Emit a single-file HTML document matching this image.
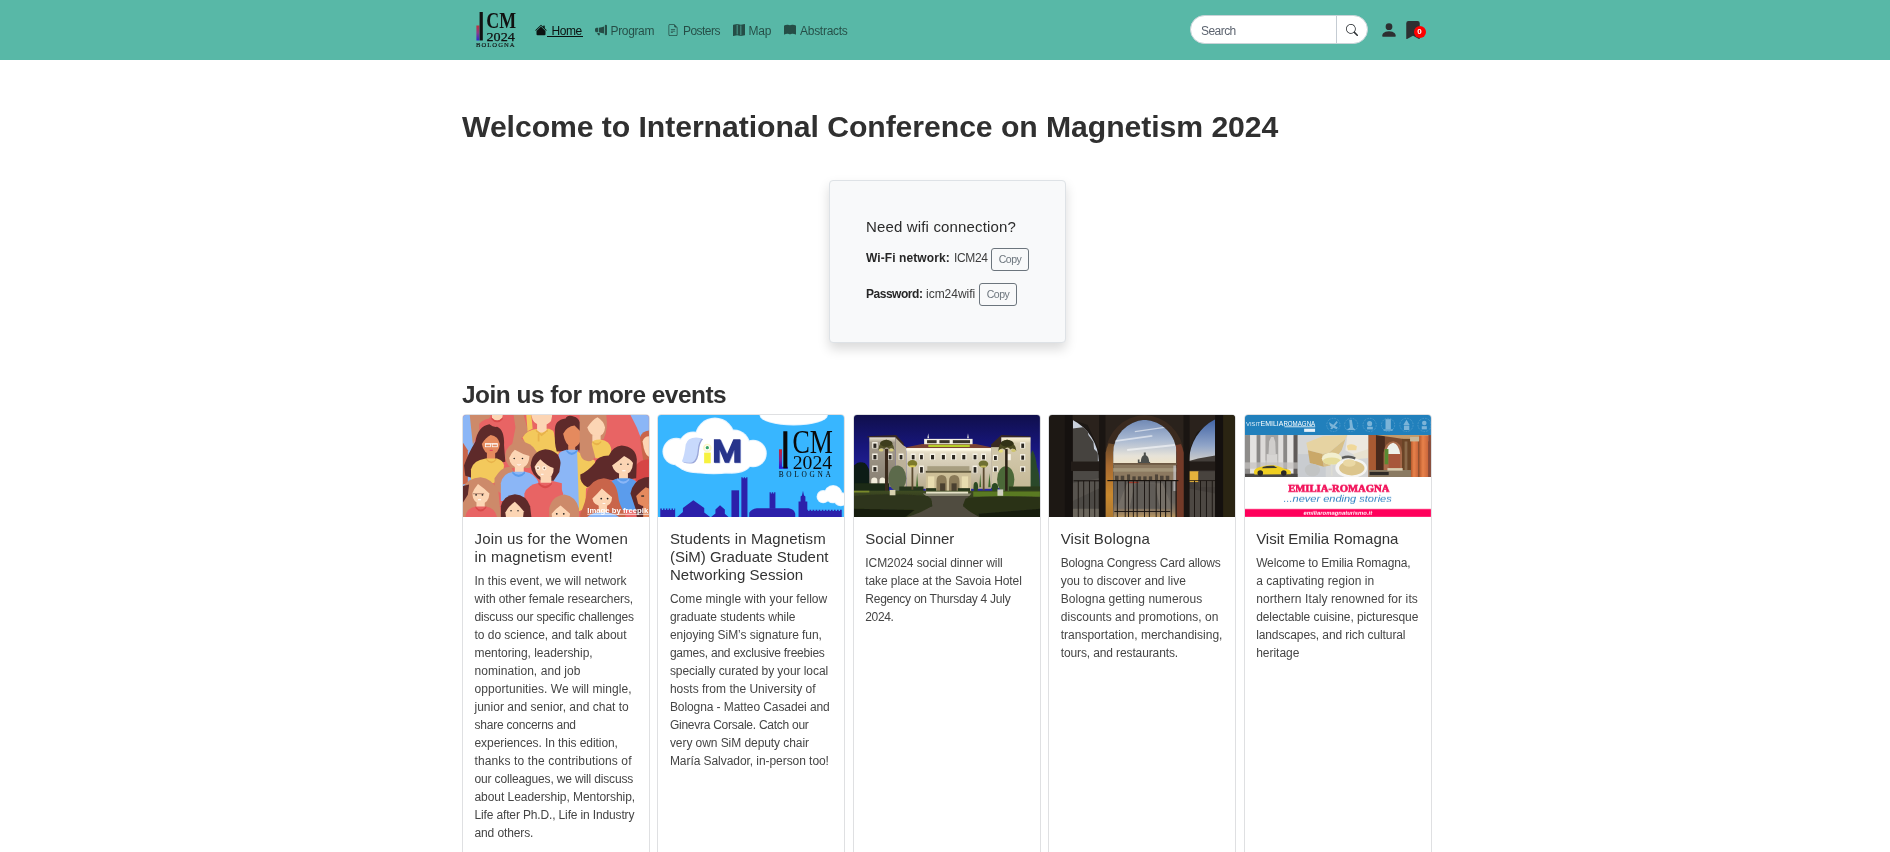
<!DOCTYPE html>
<html lang="en">
<head>
<meta charset="utf-8">
<title>International Conference on Magnetism 2024</title>
<style>
*{box-sizing:border-box}
html,body{margin:0;padding:0}
body{width:1890px;height:852px;overflow:hidden;background:#fff;font-family:"Liberation Sans",sans-serif;font-size:12px;color:#333;position:relative}
.nav{position:absolute;left:0;top:0;width:1890px;height:60px;background:#58b8a7}
.nav a{position:absolute;top:22px;height:18px;line-height:18px;font-size:12px;color:rgba(0,0,0,.58);text-decoration:none;white-space:nowrap}
.nav a.act{color:#0b1211}
.nav svg{position:absolute;fill:currentColor}
.logo{position:absolute;left:475px;top:10px;width:42px;height:38px}
.search{position:absolute;left:1190px;top:15px;width:178px;height:29px;background:#fff;border:1px solid #c9d3d8;border-radius:14.5px;overflow:hidden}
.search .t{position:absolute;left:9.5px;top:6px;font-size:12px;line-height:18px;color:#5d6470;white-space:nowrap}
.search i{position:absolute;left:145px;top:0;width:1px;height:29px;background:#c5ccd3}
h1{position:absolute;left:462px;top:109.4px;margin:0;font-size:30.2px;line-height:36px;font-weight:bold;color:#303030;white-space:nowrap}
h2{position:absolute;left:461.5px;top:379.8px;margin:0;font-size:24.4px;line-height:29px;font-weight:bold;color:#303030;white-space:nowrap}
.wifi{position:absolute;left:829px;top:180px;width:237px;height:163px;background:#f8f9fa;border:1px solid #dee2e6;border-radius:4px;box-shadow:0 6px 12px rgba(0,0,0,.15)}
.t{position:absolute;white-space:nowrap}
.btn{position:absolute;height:23px;border:1px solid #6c757d;border-radius:3px;color:#6c757d;font-size:10.5px;line-height:20px;text-align:center;white-space:nowrap}
.cards{position:absolute;left:462px;top:414px;width:969.5px;height:460px;display:flex;gap:7.5px}
.card{flex:1 1 0;border:1px solid #dfe0e2;border-radius:4px;background:#fff;overflow:hidden;position:relative}
.card .img{display:block;width:100%;height:102px;overflow:hidden;position:relative}
.card .img svg{display:block;width:100%;height:102px}
.card .body{padding:13px 0 0 11.5px}
.card h5{margin:0 0 6px 0;font-size:15px;line-height:18px;font-weight:normal;color:#333}
.card p{margin:0;font-size:12px;line-height:18px;color:#454545}
.l{display:block;white-space:nowrap}
.nav,h1,h2,.t,.btn,.cards{will-change:transform}
</style>
</head>
<body>
<div class="nav">
  <div class="logo"><svg width="42" height="38" viewBox="0 0 42 38" style="position:absolute;left:0;top:0">
<defs><linearGradient id="lg" x1="0" y1="0" x2="0" y2="1"><stop offset="0" stop-color="#c0303a"/><stop offset=".5" stop-color="#8a3a8a"/><stop offset="1" stop-color="#2a2ad0"/></linearGradient></defs>
<rect x="1.4" y="15.5" width="3" height="15" fill="url(#lg)"/>
<rect x="4.6" y="2" width="3.2" height="28.5" fill="#111"/>
<text x="11.3" y="18.4" font-family="Liberation Serif" font-weight="bold" font-size="23.5" textLength="29.8" lengthAdjust="spacingAndGlyphs" fill="#111">CM</text>
<text x="11.5" y="30.5" font-family="Liberation Serif" font-size="13.2" stroke="#111" stroke-width=".25" textLength="28.3" lengthAdjust="spacingAndGlyphs" fill="#111">2024</text>
<text x="1" y="37.1" font-family="Liberation Serif" font-size="6.6" stroke="#111" stroke-width=".15" textLength="38.5" lengthAdjust="spacing" fill="#111">BOLOGNA</text>
</svg></div>
  <a class="act" style="left:551.5px"><svg style="left:-16.5px;top:2px" width="12" height="12" viewBox="0 0 16 16"><path d="M8.707 1.5a1 1 0 0 0-1.414 0L.646 8.146a.5.5 0 0 0 .708.708L8 2.207l6.646 6.647a.5.5 0 0 0 .708-.708L13 5.793V2.5a.5.5 0 0 0-.5-.5h-1a.5.5 0 0 0-.5.5v1.293L8.707 1.5Z"/><path d="m8 3.293 6 6V13.5a1.5 1.5 0 0 1-1.5 1.5h-9A1.5 1.5 0 0 1 2 13.5V9.293l6-6Z"/></svg><span style="position:absolute;left:-4.5px;top:14px;width:35.5px;height:1px;background:#0b1211"></span><span style="letter-spacing:-0.429px">Home</span></a>
  <a style="left:610.5px"><svg style="left:-16px;top:2px" width="12" height="12" viewBox="0 0 16 16"><path d="M13 2.5a1.5 1.5 0 0 1 3 0v11a1.5 1.5 0 0 1-3 0v-11zm-1 .724c-2.067.95-4.539 1.481-7 1.656v6.237a25.222 25.222 0 0 1 1.088.085c2.053.204 4.038.668 5.912 1.56V3.224zm-8 7.841V4.934c-.68.027-1.399.043-2.008.053A2.02 2.02 0 0 0 0 7v2c0 1.106.896 1.996 1.994 2.009a68.14 68.14 0 0 1 .496.008 64 64 0 0 1 1.51.048zm1.39 1.081c.285.021.569.047.85.078l.253 1.69a1 1 0 0 1-.983 1.187h-.548a1 1 0 0 1-.916-.599l-1.314-2.48a65.81 65.81 0 0 1 1.692.064c.327.017.65.037.966.06z"/></svg><span style="letter-spacing:-0.345px">Program</span></a>
  <a style="left:683px"><svg style="left:-16px;top:2px" width="12" height="12" viewBox="0 0 16 16"><path d="M5.5 7a.5.5 0 0 0 0 1h5a.5.5 0 0 0 0-1h-5zM5 9.5a.5.5 0 0 1 .5-.5h5a.5.5 0 0 1 0 1h-5a.5.5 0 0 1-.5-.5zm0 2a.5.5 0 0 1 .5-.5h2a.5.5 0 0 1 0 1h-2a.5.5 0 0 1-.5-.5z"/><path d="M9.5 0H4a2 2 0 0 0-2 2v12a2 2 0 0 0 2 2h8a2 2 0 0 0 2-2V4.5L9.5 0zm0 1v2A1.5 1.5 0 0 0 11 4.5h2V14a1 1 0 0 1-1 1H4a1 1 0 0 1-1-1V2a1 1 0 0 1 1-1h5.5z"/></svg><span style="letter-spacing:-0.541px">Posters</span></a>
  <a style="left:748.5px"><svg style="left:-16px;top:2px" width="12" height="12" viewBox="0 0 16 16"><path fill-rule="evenodd" d="M16 .5a.5.5 0 0 0-.598-.49L10.5.99 5.598.01a.5.5 0 0 0-.196 0l-5 1A.5.5 0 0 0 0 1.5v14a.5.5 0 0 0 .598.49l4.902-.98 4.902.98a.502.502 0 0 0 .196 0l5-1A.5.5 0 0 0 16 14.5V.5zM5 14.09V1.11l.5-.1.5.1v12.98l-.402-.08a.498.498 0 0 0-.196 0L5 14.09zm5 .8V1.91l.402.08a.5.5 0 0 0 .196 0L11 1.91v12.98l-.5.1-.5-.1z"/></svg><span style="letter-spacing:-0.248px">Map</span></a>
  <a style="left:800px"><svg style="left:-16px;top:2px" width="12" height="12" viewBox="0 0 16 16"><path d="M8 1.783C7.015.936 5.587.81 4.287.94c-1.514.153-3.042.672-3.994 1.105A.5.5 0 0 0 0 2.5v11a.5.5 0 0 0 .707.455c.882-.4 2.303-.881 3.68-1.02 1.409-.142 2.59.087 3.223.877a.5.5 0 0 0 .78 0c.633-.79 1.814-1.019 3.222-.877 1.378.139 2.8.62 3.681 1.02A.5.5 0 0 0 16 13.5v-11a.5.5 0 0 0-.293-.455c-.952-.433-2.48-.952-3.994-1.105C10.413.809 8.985.936 8 1.783z"/></svg><span style="letter-spacing:-0.268px">Abstracts</span></a>
  <div class="search"><span class="t"><span style="letter-spacing:-0.555px">Search</span></span><i></i>
    <svg style="left:154.5px;top:8px;fill:#2b2f33" width="12" height="12" viewBox="0 0 16 16"><path d="M11.742 10.344a6.5 6.5 0 1 0-1.397 1.398h-.001c.03.04.062.078.098.115l3.85 3.85a1 1 0 0 0 1.415-1.414l-3.85-3.85a1.007 1.007 0 0 0-.115-.1zM12 6.5a5.5 5.5 0 1 1-11 0 5.5 5.5 0 0 1 11 0z"/></svg>
  </div>
  <svg style="left:1379.5px;top:21px;fill:#2d2f31" width="18" height="18" viewBox="0 0 16 16"><path d="M3 14s-1 0-1-1 1-4 6-4 6 3 6 4-1 1-1 1H3zm5-6a3 3 0 1 0 0-6 3 3 0 0 0 0 6z"/></svg>
  <svg style="left:1403.5px;top:21px;fill:#2d2f31" width="18" height="18" viewBox="0 0 16 16"><path d="M2 2v13.5a.5.5 0 0 0 .74.439L8 13.069l5.26 2.87A.5.5 0 0 0 14 15.5V2a2 2 0 0 0-2-2H4a2 2 0 0 0-2 2z"/></svg>
  <div style="position:absolute;left:1413.5px;top:25.5px;width:12px;height:12px;border-radius:6px;background:#f00;color:#fff;font-size:8px;font-weight:bold;line-height:12px;text-align:center">0</div>
</div>
<h1><span style="letter-spacing:-0.065px">Welcome to International Conference on Magnetism 2024</span></h1>
<div class="wifi"></div>
<div class="t" style="left:866.3px;top:217.6px;font-size:15px;line-height:18px;color:#2b2b2b"><span style="letter-spacing:0.154px">Need wifi connection?</span></div>
<div class="t" style="left:866px;top:249px;font-size:12px;line-height:18px;font-weight:bold;color:#262626"><span style="letter-spacing:0.088px">Wi-Fi network:</span></div>
<div class="t" style="left:953.5px;top:249px;font-size:12px;line-height:18px;color:#3c3c3c"><span style="letter-spacing:-0.369px">ICM24</span></div>
<div class="btn" style="left:991px;top:247.5px;width:38px"><span style="letter-spacing:-0.504px">Copy</span></div>
<div class="t" style="left:866px;top:285px;font-size:12px;line-height:18px;font-weight:bold;color:#262626"><span style="letter-spacing:-0.476px">Password:</span></div>
<div class="t" style="left:926px;top:285px;font-size:12px;line-height:18px;color:#3c3c3c"><span style="letter-spacing:-0.016px">icm24wifi</span></div>
<div class="btn" style="left:979px;top:283px;width:38px"><span style="letter-spacing:-0.504px">Copy</span></div>
<h2><span style="letter-spacing:-0.476px">Join us for more events</span></h2>
<div class="cards">
<div class="card"><div class="img"><svg viewBox="22 22 1463 803" preserveAspectRatio="none">
<rect x="22" y="22" width="1463" height="803" fill="#e86464"/>
<!-- far-left blue figure + tan hair behind -->
<rect x="22" y="22" width="90" height="560" fill="#8bb6f6"/>
<path d="M75 22 L240 22 L200 120 L130 180 L100 260 Z" fill="#cd8a6a"/>
<path d="M22 240 L60 300 L60 560 L22 570Z" fill="#c9654a"/>
<!-- red figure top-left -->
<path d="M150 90 Q200 40 290 50 Q400 40 440 140 L440 380 L150 380Z" fill="#e86464"/>
<path d="M250 22 L335 22 L330 50 Q290 80 250 50Z" fill="#fcd5b4"/>
<path d="M245 40 Q290 90 335 40 L335 55 Q290 105 245 55Z" fill="#d94a4a"/>
<!-- tan area behind between red and yellow -->
<path d="M420 22 L500 22 L535 150 L480 205 L545 255 L440 335 L400 300 L435 120Z" fill="#cd8a6a"/>
<!-- yellow figure top center -->
<path d="M520 22 L560 22 L570 130 L530 150Z" fill="#f3c95c"/>
<path d="M490 200 Q520 140 610 130 L700 130 Q770 150 775 260 L775 330 L560 330Z" fill="#f3c95c"/>
<path d="M560 22 L725 22 L715 70 Q680 110 640 100 Q590 100 570 60Z" fill="#fcd5b4"/>
<rect x="605" y="90" width="75" height="70" fill="#fcd5b4"/>
<path d="M595 135 L640 170 L690 135 L690 150 L640 190 L595 150Z" fill="#e8b24a"/>
<rect x="610" y="170" width="14" height="60" fill="#e8b24a"/>
<!-- red behind top middle -->
<path d="M725 22 L850 22 L760 120 L745 200 L730 130Z" fill="#e86464"/>
<!-- dark-skin woman top center-right -->
<path d="M745 150 Q740 60 830 50 Q840 22 880 30 Q950 40 950 120 L950 300 L760 310 Q740 250 745 150Z" fill="#5e2a2a"/>
<path d="M810 170 Q840 110 900 105 L945 150 L945 230 Q920 280 880 275 Q830 270 810 170Z" fill="#e58a5e"/>
<rect x="850" y="260" width="55" height="60" fill="#e58a5e"/>
<!-- long blue body -->
<path d="M775 330 Q790 300 850 295 L905 295 Q935 300 935 340 L935 825 L800 825 L800 560 L720 540 L770 430Z" fill="#8bb6f6"/>
<path d="M835 292 Q875 345 925 292 L925 310 Q875 365 835 310Z" fill="#5b9cec"/>
<!-- big yellow body right of blue -->
<path d="M920 310 L1060 380 L1060 560 L990 600 L985 760 L935 780Z" fill="#f3c95c"/>
<!-- tan-haired woman upper right -->
<path d="M940 22 L1160 22 Q1170 140 1130 210 L1060 230 L1065 340 Q1050 390 1000 385 Q945 380 940 300Z" fill="#cd8a6a"/>
<path d="M1000 120 Q1040 60 1080 40 Q1130 70 1140 120 Q1135 190 1075 190 Q1020 185 1000 120Z" fill="#fcd5b4"/>
<rect x="1040" y="180" width="65" height="60" fill="#fcd5b4"/>
<path d="M1035 250 Q1040 215 1100 215 Q1180 225 1190 290 L1190 340 L1065 365Z" fill="#f3c95c"/>
<path d="M1040 225 Q1075 265 1110 225 L1110 238 Q1075 280 1040 240Z" fill="#e8b24a"/>
<!-- red region top right -->
<path d="M1150 22 L1345 22 L1420 250 L1440 420 L1380 520 L1190 360 L1190 280 Q1180 230 1130 210 Q1165 140 1150 22Z" fill="#e86464"/>
<!-- top-right blue & face at far right -->
<path d="M1340 22 L1485 22 L1485 160 L1420 200 L1390 120Z" fill="#8bb6f6"/>
<path d="M1415 200 Q1430 150 1485 145 L1485 400 L1440 380Z" fill="#c9654a"/>
<path d="M1435 230 Q1450 190 1485 190 L1485 350 Q1450 340 1435 230Z" fill="#fcd5b4"/>
<path d="M1380 420 Q1420 370 1485 370 L1485 560 L1380 540Z" fill="#d64545"/>
<!-- woman with glasses (dark hair, left) -->
<path d="M30 420 Q60 330 120 230 Q140 110 230 95 Q260 120 290 115 Q350 140 345 260 L355 390 L300 400 L100 520 L40 500Z" fill="#5e2a2a"/>
<path d="M170 250 Q200 200 240 180 Q300 190 312 250 Q305 330 245 330 Q185 330 170 250Z" fill="#e58a5e"/>
<rect x="210" y="320" width="65" height="60" fill="#e58a5e"/>
<path d="M85 450 Q100 380 200 365 L290 365 Q340 380 345 420 L330 520 L260 560 L85 540Z" fill="#f3c95c"/>
<path d="M205 362 Q245 415 285 362 L285 375 Q245 430 205 375Z" fill="#e8b24a"/>
<rect x="195" y="245" width="100" height="8" fill="#fff"/>
<rect x="198" y="250" width="40" height="22" fill="none" stroke="#fff" stroke-width="6"/>
<rect x="252" y="250" width="40" height="22" fill="none" stroke="#fff" stroke-width="6"/>
<rect x="232" y="296" width="24" height="8" fill="#e0405a"/>
<!-- tan-haired woman center-left with blue shirt -->
<path d="M355 330 Q370 250 450 235 Q560 225 600 310 L590 360 L545 440 L400 440 Q350 400 355 330Z" fill="#cd8a6a"/>
<path d="M270 520 Q330 420 400 430 L420 470 L330 520 L320 640 L270 600Z" fill="#cd8a6a"/>
<path d="M385 360 Q400 320 430 295 Q490 330 545 345 Q540 440 465 440 Q395 435 385 360Z" fill="#fcd5b4"/>
<rect x="430" y="430" width="70" height="55" fill="#fcd5b4"/>
<path d="M320 560 Q330 480 420 468 L510 468 Q590 480 620 560 L620 700 L320 700Z" fill="#8bb6f6"/>
<path d="M410 465 Q460 520 510 465 L510 482 Q460 540 410 482Z" fill="#5b9cec"/>
<circle cx="425" cy="365" r="6" fill="#222"/><circle cx="490" cy="365" r="6" fill="#222"/>
<path d="M445 405 Q462 420 480 405 L478 412 Q462 428 447 412Z" fill="#fff"/>
<!-- dark-haired woman right (flowing hair) -->
<path d="M945 490 Q1000 470 1060 400 Q1080 340 1170 340 Q1200 270 1270 262 Q1380 270 1390 370 L1385 520 L1250 540 L1160 530 L1000 590 Q940 560 945 490Z" fill="#5e2a2a"/>
<path d="M1195 420 Q1250 380 1290 345 Q1340 370 1360 400 Q1355 490 1285 490 Q1215 490 1195 420Z" fill="#fcd5b4"/>
<rect x="1250" y="480" width="70" height="60" fill="#fcd5b4"/>
<path d="M1190 545 Q1220 520 1260 520 L1330 520 Q1380 530 1390 560 L1390 770 L1240 770Z" fill="#5b9cec"/>
<path d="M1235 520 Q1285 570 1330 520 L1330 535 Q1285 590 1235 535Z" fill="#8bb6f6"/>
<circle cx="1265" cy="410" r="6" fill="#222"/><circle cx="1320" cy="410" r="6" fill="#222"/>
<rect x="1275" y="457" width="26" height="8" fill="#fff"/>
<!-- center dark-haired woman with glasses, red shirt -->
<path d="M555 420 Q560 310 670 292 Q780 300 790 400 L780 470 L735 540 L640 540 Q560 500 555 420Z" fill="#5e2a2a"/>
<path d="M585 430 Q600 400 630 370 Q680 420 735 440 Q740 520 665 522 Q600 515 585 430Z" fill="#fcd5b4"/>
<rect x="632" y="505" width="85" height="80" fill="#fcd5b4"/>
<path d="M505 640 Q530 570 620 555 L720 555 Q790 570 810 640 L810 825 L505 825Z" fill="#e86464"/>
<path d="M615 552 Q670 610 722 552 L722 568 Q670 630 615 568Z" fill="#d94a4a"/>
<circle cx="612" cy="440" r="14" fill="none" stroke="#fff" stroke-width="5"/><circle cx="662" cy="440" r="14" fill="none" stroke="#fff" stroke-width="5"/>
<circle cx="612" cy="440" r="5" fill="#222"/><circle cx="662" cy="440" r="5" fill="#222"/>
<rect x="636" y="485" width="20" height="7" fill="#fff"/>
<!-- bottom-left girl with glasses -->
<path d="M22 590 Q60 520 160 512 Q250 520 300 620 L320 825 L22 825Z" fill="#cd8a6a"/>
<path d="M22 580 L70 570 L60 650 L22 710Z" fill="#5e2a2a"/>
<path d="M95 640 Q110 600 140 565 Q190 600 230 640 Q225 720 160 722 Q100 715 95 640Z" fill="#fcd5b4"/>
<rect x="128" y="710" width="65" height="60" fill="#fcd5b4"/>
<path d="M40 825 Q50 750 130 742 L200 742 Q270 750 290 825Z" fill="#e86464"/>
<path d="M120 740 Q160 790 205 740 L205 755 Q160 810 120 755Z" fill="#d94a4a"/>
<circle cx="125" cy="650" r="7" fill="#222"/><circle cx="175" cy="650" r="7" fill="#222"/>
<rect x="98" y="640" width="90" height="5" fill="#8a5a4a"/>
<rect x="140" y="685" width="24" height="8" fill="#fff"/>
<!-- bottom dark-haired girl -->
<path d="M320 740 Q340 655 430 645 Q520 650 550 740 L560 825 L320 825Z" fill="#5e2a2a"/>
<path d="M355 790 Q380 740 430 705 Q470 740 500 780 L495 825 L360 825Z" fill="#fcd5b4"/>
<circle cx="400" cy="775" r="6" fill="#222"/><circle cx="455" cy="775" r="6" fill="#222"/>
<!-- bottom center tan-haired girl -->
<path d="M700 760 Q720 660 820 648 Q910 660 935 760 L935 825 L700 825Z" fill="#cd8a6a"/>
<path d="M720 800 Q750 760 790 735 Q830 770 865 800 L860 825 L722 825Z" fill="#fcd5b4"/>
<circle cx="760" cy="800" r="7" fill="#222"/><circle cx="815" cy="800" r="7" fill="#222"/>
<!-- auburn-haired girl bottom right -->
<path d="M945 800 Q990 700 1000 620 Q1030 530 1130 520 Q1220 530 1240 640 Q1250 740 1300 800 L1300 825 L945 825Z" fill="#c9654a"/>
<path d="M1040 680 Q1080 640 1115 600 Q1160 640 1195 670 Q1195 740 1125 742 Q1050 740 1040 680Z" fill="#fcd5b4"/>
<rect x="1090" y="730" width="65" height="70" fill="#fcd5b4"/>
<path d="M1000 825 Q1040 790 1090 790 L1160 790 Q1220 800 1250 825Z" fill="#8bb6f6"/>
<circle cx="1110" cy="680" r="7" fill="#222"/><circle cx="1160" cy="680" r="7" fill="#222"/>
<rect x="1120" y="715" width="22" height="7" fill="#fff"/>
<!-- far right dark-haired dark-skin woman -->
<path d="M1340 640 Q1360 540 1450 515 L1485 510 L1485 825 L1390 825 L1380 760Z" fill="#5e2a2a"/>
<path d="M1385 660 Q1420 620 1460 590 L1485 600 L1485 740 Q1430 745 1400 720Z" fill="#e58a5e"/>
<path d="M1440 720 L1485 720 L1485 825 L1440 825Z" fill="#e58a5e"/>
<rect x="1425" y="655" width="22" height="10" fill="#222"/>
<!-- caption -->
<text x="1000" y="793" font-family="Liberation Sans" font-weight="bold" font-size="50" fill="#fff" textLength="480" lengthAdjust="spacingAndGlyphs">Image by freepik</text>
<rect x="1000" y="800" width="485" height="6" fill="#fff"/>
</svg></div><div class="body"><h5><span class="l" style="letter-spacing:0.176px">Join us for the Women</span><span class="l" style="letter-spacing:0.214px">in magnetism event!</span></h5><p><span class="l" style="letter-spacing:-0.002px">In this event, we will network</span><span class="l" style="letter-spacing:-0.094px">with other female researchers,</span><span class="l" style="letter-spacing:-0.173px">discuss our specific challenges</span><span class="l" style="letter-spacing:-0.027px">to do science, and talk about</span><span class="l" style="letter-spacing:-0.029px">mentoring, leadership,</span><span class="l" style="letter-spacing:0.066px">nomination, and job</span><span class="l" style="letter-spacing:0.064px">opportunities. We will mingle,</span><span class="l" style="letter-spacing:0.006px">junior and senior, and chat to</span><span class="l" style="letter-spacing:-0.228px">share concerns and</span><span class="l" style="letter-spacing:-0.07px">experiences. In this edition,</span><span class="l" style="letter-spacing:0.122px">thanks to the contributions of</span><span class="l" style="letter-spacing:-0.155px">our colleagues, we will discuss</span><span class="l" style="letter-spacing:-0.052px">about Leadership, Mentorship,</span><span class="l" style="letter-spacing:-0.146px">Life after Ph.D., Life in Industry</span><span class="l" style="letter-spacing:-0.113px">and others.</span></p></div></div>
<div class="card"><div class="img"><svg viewBox="22 22 1463 803" preserveAspectRatio="none">
<defs><linearGradient id="lg2" x1="0" y1="0" x2="0" y2="1"><stop offset="0" stop-color="#d0202a"/><stop offset=".55" stop-color="#7a2a9a"/><stop offset="1" stop-color="#1a1ae0"/></linearGradient>
<filter id="cb" x="-5%" y="-5%" width="110%" height="110%"><feGaussianBlur stdDeviation="3"/></filter></defs>
<rect x="22" y="22" width="1463" height="803" fill="#38b6ff"/>
<g fill="#e4f3ff" filter="url(#cb)">
<circle cx="470" cy="200" r="158"/><circle cx="165" cy="310" r="108"/><circle cx="770" cy="325" r="108"/><circle cx="620" cy="265" r="128"/><circle cx="300" cy="270" r="118"/><ellipse cx="460" cy="385" rx="320" ry="103"/><ellipse cx="330" cy="410" rx="150" ry="70"/><ellipse cx="600" cy="410" rx="150" ry="75"/>
<ellipse cx="1090" cy="25" rx="268" ry="80"/>
<circle cx="1400" cy="645" r="72"/><circle cx="1322" cy="665" r="52"/><circle cx="1460" cy="685" r="56"/>
</g>
<g fill="#fff">
<circle cx="470" cy="200" r="150"/><circle cx="165" cy="310" r="100"/><circle cx="770" cy="325" r="100"/><circle cx="620" cy="265" r="120"/><circle cx="300" cy="270" r="110"/><ellipse cx="460" cy="385" rx="312" ry="95"/><ellipse cx="330" cy="410" rx="142" ry="62"/><ellipse cx="600" cy="410" rx="142" ry="67"/>
<ellipse cx="1090" cy="25" rx="260" ry="72"/>
<circle cx="1400" cy="645" r="65"/><circle cx="1322" cy="665" r="45"/><circle cx="1460" cy="685" r="49"/>
</g>
<!-- SiM -->
<path d="M222 395 Q240 340 248 260 Q262 205 330 205 L378 210 Q350 240 345 300 Q340 385 300 402 Q255 408 222 395Z" fill="#9aa6d8"/>
<path d="M210 388 Q232 335 240 255 Q255 200 322 200 L368 205 Q340 235 335 295 Q330 378 290 395 Q245 402 210 388Z" fill="#c8d9fc"/>
<rect x="385" y="318" width="52" height="84" fill="#f7f23e"/>
<circle cx="410" cy="282" r="34" fill="#fbf6c8"/><circle cx="410" cy="280" r="20" fill="#fff"/><circle cx="410" cy="279" r="13" fill="#3aa66a"/>
<path d="M470 402 L470 218 L520 218 L570 330 L620 218 L676 218 L676 402 L628 402 L628 300 L585 402 L555 402 L512 300 L512 402Z" fill="#9aa6d8"/>
<path d="M462 398 L462 213 L512 213 L565 330 L615 213 L670 213 L670 398 L622 398 L622 295 L580 398 L548 398 L506 295 L506 398Z" fill="#27348b"/>
<!-- ICM logo -->
<rect x="974" y="292" width="24" height="150" fill="url(#lg2)"/>
<path d="M974 430 L1045 430 L1045 445 L974 445Z" fill="#2a1fd0"/>
<rect x="1008" y="150" width="32" height="292" fill="#0a0a0a"/>
<text x="1080" y="321" font-family="Liberation Serif" font-size="258" textLength="318" lengthAdjust="spacingAndGlyphs" fill="#0a0a0a">CM</text>
<text x="1082" y="445" font-family="Liberation Serif" font-size="140" textLength="310" lengthAdjust="spacingAndGlyphs" fill="#0a0a0a">2024</text>
<text x="972" y="510" font-family="Liberation Serif" font-size="58" textLength="410" lengthAdjust="spacing" fill="#0a0a0a">BOLOGNA</text>
<!-- skyline -->
<g fill="#2c20aa">
<path d="M40 825 L40 758 L52 758 L52 770 L62 770 L62 758 L74 758 L74 770 L84 770 L84 758 L96 758 L96 770 L106 770 L106 758 L118 758 L118 770 L128 770 L128 758 L140 758 L140 770 L150 770 L150 758 L157 758 L157 825Z"/>
<path d="M172 825 L218 785 L218 755 L300 693 L386 755 L386 790 L432 825Z"/>
<path d="M440 825 L474 797 L474 765 L510 733 L548 765 L548 800 L577 825Z"/>
<rect x="600" y="615" width="60" height="210"/>
<path d="M678 825 L678 513 L688 513 L688 520 L697 520 L697 513 L707 513 L707 520 L716 520 L716 513 L726 513 L726 825Z"/>
<path d="M740 825 L740 792 Q758 762 800 757 L1050 757 Q1095 765 1102 800 L1102 825Z"/>
<path d="M900 760 L900 630 L910 630 L910 640 L918 640 L918 630 L928 630 L928 640 L936 640 L936 630 L946 630 L946 760Z"/>
<path d="M1128 825 L1128 702 L1144 702 L1144 664 L1155 655 L1163 618 L1171 655 L1182 664 L1182 702 L1197 702 L1197 825Z"/>
<path d="M1190 825 L1190 768 L1204 768 L1204 778 L1214 778 L1214 768 L1228 768 L1228 778 L1238 778 L1238 768 L1252 768 L1252 778 L1262 778 L1262 768 L1276 768 L1276 778 L1286 778 L1286 768 L1300 768 L1300 778 L1310 778 L1310 768 L1324 768 L1324 778 L1334 778 L1334 768 L1348 768 L1348 778 L1358 778 L1358 768 L1372 768 L1372 778 L1382 778 L1382 768 L1396 768 L1396 778 L1406 778 L1406 768 L1420 768 L1420 778 L1430 778 L1430 768 L1444 768 L1444 778 L1454 778 L1454 768 L1468 768 L1468 825Z"/>
</g>
</svg></div><div class="body"><h5><span class="l" style="letter-spacing:0.158px">Students in Magnetism</span><span class="l" style="letter-spacing:0.008px">(SiM) Graduate Student</span><span class="l" style="letter-spacing:0.041px">Networking Session</span></h5><p><span class="l" style="letter-spacing:0.048px">Come mingle with your fellow</span><span class="l" style="letter-spacing:-0.054px">graduate students while</span><span class="l" style="letter-spacing:-0.041px">enjoying SiM’s signature fun,</span><span class="l" style="letter-spacing:-0.232px">games, and exclusive freebies</span><span class="l" style="letter-spacing:-0.061px">specially curated by your local</span><span class="l" style="letter-spacing:0.011px">hosts from the University of</span><span class="l" style="letter-spacing:-0.082px">Bologna - Matteo Casadei and</span><span class="l" style="letter-spacing:-0.258px">Ginevra Corsale. Catch our</span><span class="l" style="letter-spacing:-0.065px">very own SiM deputy chair</span><span class="l" style="letter-spacing:-0.059px">María Salvador, in-person too!</span></p></div></div>
<div class="card"><div class="img"><svg viewBox="25 22 1458 803" preserveAspectRatio="none">
<defs>
<linearGradient id="sky3" x1="0" y1="0" x2="0" y2="1"><stop offset="0" stop-color="#100f4c"/><stop offset=".3" stop-color="#17167a"/><stop offset=".65" stop-color="#2624a2"/><stop offset="1" stop-color="#2c2aa8"/></linearGradient>
<linearGradient id="bl3" x1="0" y1="0" x2="0" y2="1"><stop offset="0" stop-color="#fbf6e2"/><stop offset=".12" stop-color="#e2dac4"/><stop offset=".55" stop-color="#cdc4ae"/><stop offset="1" stop-color="#b8ab8c"/></linearGradient>
<linearGradient id="bw3" x1="0" y1="0" x2="0" y2="1"><stop offset="0" stop-color="#efe8d2"/><stop offset=".1" stop-color="#a59c8c"/><stop offset="1" stop-color="#857d70"/></linearGradient>
<linearGradient id="br3" x1="0" y1="0" x2="0" y2="1"><stop offset="0" stop-color="#fff6d8"/><stop offset=".12" stop-color="#d6ccb0"/><stop offset="1" stop-color="#c4b896"/></linearGradient>
<linearGradient id="lawn3" x1="0" y1="0" x2="0" y2="1"><stop offset="0" stop-color="#3f4c22"/><stop offset=".25" stop-color="#343d1f"/><stop offset="1" stop-color="#1f2511"/></linearGradient>
<filter id="b3"><feGaussianBlur stdDeviation="5"/></filter>
<filter id="b3s"><feGaussianBlur stdDeviation="2.5"/></filter>
</defs>
<rect x="25" y="22" width="1458" height="803" fill="url(#sky3)"/>
<!-- dark trees left/right -->
<path d="M25 420 Q60 380 110 400 Q150 430 150 520 L150 620 L25 620Z" fill="#0b1a14" filter="url(#b3s)"/>
<path d="M1400 600 Q1370 500 1395 420 Q1405 330 1425 300 Q1450 340 1460 430 Q1483 480 1483 600Z" fill="#2c4a2a" filter="url(#b3s)"/>
<!-- left tower -->
<path d="M130 190 L355 180 L415 245 L415 290 L350 290 L350 200 L130 200Z" fill="#3a2a22"/>
<rect x="145" y="198" width="205" height="390" fill="url(#bw3)"/>
<path d="M350 200 L410 260 L435 275 L435 590 L350 590Z" fill="#bdb29a"/>
<!-- right wing -->
<path d="M1410 190 L1180 180 L1100 255 L1100 290 L1180 290 L1180 200 L1410 200Z" fill="#3a2a22"/>
<rect x="1100" y="275" width="90" height="320" fill="#cfc5a8"/>
<rect x="1180" y="198" width="230" height="400" fill="url(#br3)"/>
<!-- central block -->
<path d="M435 275 L560 250 L980 250 L1100 275 L1100 285 L435 285Z" fill="#7a4234"/>
<rect x="435" y="283" width="665" height="320" fill="url(#bl3)"/>
<rect x="435" y="283" width="665" height="18" fill="#fffbe6"/>
<rect x="575" y="210" width="380" height="42" fill="#f4f0e4"/>
<g fill="#3a3428"><rect x="598" y="220" width="75" height="24"/><rect x="695" y="220" width="80" height="24"/><rect x="800" y="220" width="135" height="24"/></g>
<rect x="608" y="256" width="325" height="18" fill="#b7cf28"/>
<path d="M600 205 L607 165 L614 205Z M912 205 L919 165 L926 205Z" fill="#ddd"/>
<!-- windows -->
<g fill="#f6f2e6">
<rect x="470" y="325" width="38" height="50"/><rect x="535" y="325" width="38" height="50"/><rect x="620" y="325" width="42" height="50"/><rect x="705" y="325" width="42" height="50"/><rect x="785" y="325" width="42" height="50"/><rect x="865" y="325" width="42" height="50"/><rect x="955" y="325" width="38" height="50"/><rect x="1022" y="325" width="38" height="50"/>
<rect x="535" y="420" width="38" height="60"/><rect x="955" y="420" width="38" height="60"/>
<rect x="168" y="235" width="42" height="50"/><rect x="168" y="325" width="42" height="50"/><rect x="168" y="420" width="42" height="50"/><rect x="290" y="325" width="36" height="50"/>
<rect x="375" y="325" width="38" height="50"/>
<rect x="1115" y="335" width="38" height="45"/><rect x="1115" y="425" width="38" height="45"/>
<rect x="1328" y="235" width="40" height="50"/><rect x="1328" y="330" width="40" height="48"/><rect x="1328" y="425" width="40" height="45"/><rect x="1225" y="330" width="30" height="48"/>
</g>
<g fill="#2a2620">
<rect x="478" y="337" width="22" height="34"/><rect x="543" y="337" width="22" height="34"/><rect x="629" y="337" width="24" height="34"/><rect x="714" y="337" width="24" height="34"/><rect x="794" y="337" width="24" height="34"/><rect x="874" y="337" width="24" height="34"/><rect x="963" y="337" width="22" height="34"/><rect x="1030" y="337" width="22" height="34"/>
<rect x="543" y="432" width="22" height="44"/><rect x="963" y="432" width="22" height="44"/>
<rect x="177" y="247" width="24" height="34"/><rect x="177" y="337" width="24" height="34"/><rect x="177" y="432" width="24" height="34"/><rect x="297" y="337" width="22" height="34"/><rect x="383" y="337" width="22" height="34"/>
<rect x="1123" y="345" width="22" height="31"/><rect x="1123" y="435" width="22" height="31"/>
<rect x="1337" y="247" width="22" height="34"/><rect x="1337" y="341" width="22" height="33"/><rect x="1337" y="436" width="22" height="30"/>
</g>
<!-- portico -->
<rect x="588" y="468" width="355" height="165" fill="#cdbf98"/>
<rect x="588" y="462" width="355" height="14" fill="#5a5238"/>
<rect x="600" y="425" width="330" height="40" fill="#9a9070" opacity=".75"/>
<path d="M672 633 L672 545 Q672 495 712 495 Q752 495 752 545 L752 633Z" fill="#8a7a58"/>
<path d="M770 633 L770 545 Q770 495 812 495 Q852 495 852 545 L852 633Z" fill="#8a7a58"/>
<rect x="605" y="505" width="50" height="95" fill="#e8dcb0"/><rect x="870" y="505" width="50" height="95" fill="#e8dcb0"/>
<rect x="700" y="560" width="40" height="70" fill="#4a4030"/><rect x="790" y="560" width="40" height="70" fill="#4a4030"/>
<!-- arches left tower bottom -->
<path d="M160 570 L160 540 Q160 515 185 515 Q208 515 208 540 L208 570Z M225 570 L225 540 Q225 515 248 515 Q270 515 270 540 L270 570Z" fill="#f4eedc"/>
<!-- bushes in front of building -->
<g filter="url(#b3s)">
<ellipse cx="365" cy="520" rx="70" ry="100" fill="#5c6a4c"/>
<ellipse cx="1215" cy="530" rx="68" ry="105" fill="#4c6838"/>
<rect x="30" y="560" width="270" height="70" fill="#1c2a14"/>
<rect x="380" y="585" width="190" height="40" fill="#26341a"/>
<rect x="590" y="598" width="80" height="35" fill="#26341a"/><rect x="840" y="598" width="95" height="35" fill="#26341a"/>
<ellipse cx="980" cy="590" rx="18" ry="40" fill="#2c4a22"/><ellipse cx="1130" cy="595" rx="26" ry="38" fill="#2c4a22"/>
<rect x="1240" y="585" width="243" height="45" fill="#2a3a1a"/>
<path d="M512 590 L520 480 L528 590Z M1008 590 L1015 480 L1022 590Z M1078 590 L1087 480 L1096 590Z" fill="#3c6a2a"/>
</g>
<!-- palms -->
<rect x="268" y="290" width="24" height="375" fill="#3a2a1c"/>
<g filter="url(#b3s)"><path d="M215 300 Q220 230 278 215 Q335 230 342 300 Q320 270 300 290 Q280 260 262 292 Q240 268 215 300Z" fill="#55532a"/><ellipse cx="278" cy="245" rx="48" ry="26" fill="#3c3c1c"/><ellipse cx="238" cy="298" rx="18" ry="12" fill="#d6cc7a"/><ellipse cx="318" cy="298" rx="18" ry="12" fill="#d6cc7a"/></g>
<rect x="1210" y="290" width="20" height="375" fill="#2c2216"/>
<g filter="url(#b3s)"><path d="M1155 310 Q1162 232 1226 215 Q1290 232 1298 305 Q1275 272 1252 294 Q1228 262 1205 296 Q1182 272 1155 310Z" fill="#4c4a22"/><ellipse cx="1226" cy="245" rx="50" ry="26" fill="#323216"/><ellipse cx="1176" cy="306" rx="18" ry="13" fill="#e6dc78"/><ellipse cx="1276" cy="302" rx="18" ry="12" fill="#cfc56e"/></g>
<rect x="476" y="420" width="14" height="190" fill="#5a4a30"/>
<g filter="url(#b3s)"><ellipse cx="483" cy="405" rx="38" ry="28" fill="#7c7a2c"/><ellipse cx="483" cy="426" rx="26" ry="8" fill="#d8cc58"/></g>
<rect x="1035" y="425" width="14" height="190" fill="#5a4a30"/>
<g filter="url(#b3s)"><ellipse cx="1040" cy="408" rx="38" ry="28" fill="#6e7030"/><ellipse cx="1040" cy="428" rx="25" ry="8" fill="#c4bc60"/></g>
<!-- ground -->
<rect x="25" y="618" width="1458" height="207" fill="url(#lawn3)"/>
<rect x="960" y="625" width="523" height="40" fill="#5a7a22" filter="url(#b3)"/>
<rect x="25" y="618" width="120" height="14" fill="#7a8a2a" filter="url(#b3)"/>
<path d="M565 640 L945 640 L900 690 L880 740 L1010 825 L420 825 L640 740 L630 680Z" fill="#504c40"/>
<path d="M565 640 L945 640 L930 660 L590 660Z" fill="#8c8a74"/>
<rect x="590" y="625" width="330" height="16" fill="#e6e2c8" filter="url(#b3s)"/>
<g filter="url(#b3)">
<path d="M25 660 Q300 630 600 660 Q650 700 630 740 Q560 790 440 825 L25 825Z" fill="#2e351b"/>
<path d="M900 680 Q1100 650 1483 670 L1483 825 L1010 825 Q900 770 880 730Z" fill="#2b3219"/>
<path d="M25 760 L500 770 L430 825 L25 825Z" fill="#191f0f"/>
<path d="M1000 800 L1483 760 L1483 825 L1010 825Z" fill="#191f0f"/>
</g>
<rect x="305" y="612" width="45" height="42" fill="#d8d0b0"/><rect x="1150" y="608" width="45" height="50" fill="#d0d0c0"/>
</svg></div><div class="body"><h5><span class="l" style="letter-spacing:-0.017px">Social Dinner</span></h5><p><span class="l" style="letter-spacing:-0.081px">ICM2024 social dinner will</span><span class="l" style="letter-spacing:-0.101px">take place at the Savoia Hotel</span><span class="l" style="letter-spacing:-0.261px">Regency on Thursday 4 July</span><span class="l" style="letter-spacing:-0.386px">2024.</span></p></div></div>
<div class="card"><div class="img"><svg viewBox="25 22 1465 803" preserveAspectRatio="none">
<defs>
<linearGradient id="sky4" x1="0" y1="0" x2="0" y2="1"><stop offset="0" stop-color="#6f88b4"/><stop offset=".45" stop-color="#a9b9d2"/><stop offset=".8" stop-color="#e6e2d8"/><stop offset="1" stop-color="#f0e4c8"/></linearGradient>
<linearGradient id="sky4r" x1="0" y1="0" x2="0" y2="1"><stop offset="0" stop-color="#3f62a4"/><stop offset=".6" stop-color="#8fa4c8"/><stop offset="1" stop-color="#d8d4cc"/></linearGradient>
<linearGradient id="pz4" x1="0" y1="0" x2="0" y2="1"><stop offset="0" stop-color="#5e5a56"/><stop offset=".6" stop-color="#6a655f"/><stop offset=".85" stop-color="#8e7a62"/><stop offset="1" stop-color="#b8955e"/></linearGradient>
<linearGradient id="brL" x1="0" y1="0" x2="0" y2="1"><stop offset="0" stop-color="#6a4a2a"/><stop offset=".3" stop-color="#a86a30"/><stop offset=".7" stop-color="#c8882e"/><stop offset="1" stop-color="#b07a30"/></linearGradient>
<filter id="b4"><feGaussianBlur stdDeviation="3"/></filter>
<clipPath id="archC"><path d="M530 825 L530 320 A 264 264 0 0 1 778 60 A 264 264 0 0 1 1030 320 L1030 825Z"/></clipPath>
<clipPath id="archL"><path d="M212 825 L212 62 A 380 380 0 0 1 418 385 L418 825Z"/></clipPath>
<clipPath id="archR"><path d="M1335 825 L1335 55 A 380 380 0 0 0 1128 385 L1128 825Z"/></clipPath>
</defs>
<rect x="25" y="22" width="1465" height="803" fill="#1d1814"/>
<rect x="1395" y="22" width="95" height="803" fill="#2a2412"/>
<rect x="150" y="22" width="60" height="803" fill="#15110f"/>
<path d="M212 22 L1335 22 L1335 60 L1190 160 L1130 300 L1085 300 Q1000 60 775 40 Q560 60 470 300 L420 300 L330 100 L212 60Z" fill="#2a221c"/>
<!-- left opening -->
<g clip-path="url(#archL)">
<rect x="212" y="55" width="210" height="340" fill="#c9d0dc"/>
<path d="M212 128 L290 118 L330 125 L335 180 L375 235 L380 290 L410 320 L410 400 L212 400Z" fill="#46433f"/>
<rect x="212" y="385" width="210" height="440" fill="#4c4945"/>
<path d="M212 560 L420 520 L420 600 L212 700Z" fill="#57534e"/>
<rect x="212" y="760" width="210" height="65" fill="#6a655c"/>
</g>
<!-- right opening -->
<g clip-path="url(#archR)">
<rect x="1128" y="50" width="210" height="350" fill="url(#sky4r)"/>
<path d="M1128 385 L1200 365 L1335 340 L1335 825 L1128 825Z" fill="#433e3a"/>
<rect x="1128" y="465" width="75" height="85" fill="#e4b23c"/>
<rect x="1203" y="470" width="132" height="120" fill="#48433e"/>
<path d="M1128 600 L1335 640 L1335 825 L1128 825Z" fill="#4d4843"/>
</g>
<!-- window frames horizontal bars -->
<rect x="198" y="388" width="252" height="75" fill="#221c18"/>
<rect x="1100" y="388" width="255" height="72" fill="#221c18"/>
<rect x="420" y="22" width="50" height="803" fill="#1a1512"/>
<rect x="1085" y="22" width="48" height="803" fill="#1a1512"/>
<!-- brick arch -->
<path d="M468 825 L468 320 A 325 325 0 0 1 778 22 A 325 325 0 0 1 1088 320 L1088 825 L1030 825 L1030 320 A 264 264 0 0 0 778 60 A 264 264 0 0 0 530 320 L530 825Z" fill="#3a2a1f"/>
<path d="M472 825 L472 320 Q478 280 495 245 L545 255 Q532 290 530 320 L530 825Z" fill="url(#brL)"/>
<path d="M1030 825 L1030 320 Q1026 290 1015 262 L1065 250 Q1082 285 1086 320 L1086 825Z" fill="#733a28"/>
<!-- central view -->
<g clip-path="url(#archC)">
<rect x="530" y="55" width="500" height="360" fill="url(#sky4)"/>
<g filter="url(#b4)" opacity=".55" fill="#fff"><rect x="540" y="200" width="300" height="14" transform="rotate(-8 690 207)"/><rect x="640" y="270" width="380" height="16" transform="rotate(-6 830 278)"/><rect x="700" y="130" width="250" height="10" transform="rotate(-8 825 135)"/></g>
<path d="M725 400 L725 372 L738 372 L738 392 L748 392 Q750 345 772 338 L772 318 L788 318 L788 338 Q812 345 815 392 L822 392 L822 400Z" fill="#4c4f4c"/>
<rect x="530" y="400" width="500" height="145" fill="#8c7960"/>
<rect x="530" y="400" width="500" height="14" fill="#6e5a44"/>
<rect x="530" y="440" width="500" height="28" fill="#a39478"/>
<g fill="#4e4438"><rect x="545" y="500" width="28" height="40"/><rect x="590" y="500" width="28" height="40"/><rect x="640" y="490" width="24" height="50"/><rect x="682" y="505" width="26" height="35"/><rect x="725" y="505" width="26" height="35"/><rect x="768" y="505" width="26" height="35"/><rect x="812" y="505" width="26" height="35"/><rect x="860" y="490" width="24" height="50"/><rect x="900" y="500" width="28" height="40"/><rect x="945" y="500" width="28" height="40"/></g>
<rect x="530" y="540" width="500" height="285" fill="url(#pz4)"/>
<path d="M640 560 L920 560 L1000 760 L560 760Z" fill="#746e66"/>
<path d="M700 560 L860 560 L900 760 L660 760Z" fill="#605c57"/>
<rect x="655" y="548" width="75" height="10" fill="#a03a2a"/>
<rect x="1005" y="420" width="25" height="200" fill="#c8c8cc" opacity=".7"/>
</g>
<!-- railings -->
<g fill="#17120e">
<rect x="485" y="534" width="560" height="9"/>
<rect x="540" y="778" width="440" height="7"/>
<rect x="560" y="538" width="7" height="287"/><rect x="622" y="538" width="7" height="287"/><rect x="648" y="538" width="7" height="287"/><rect x="686" y="538" width="7" height="287"/><rect x="716" y="538" width="7" height="287"/><rect x="774" y="538" width="7" height="287"/><rect x="812" y="538" width="7" height="287"/><rect x="866" y="538" width="7" height="287"/><rect x="900" y="538" width="7" height="287"/><rect x="940" y="538" width="8" height="287"/><rect x="985" y="538" width="7" height="287"/><rect x="1022" y="538" width="8" height="287"/>
<rect x="218" y="536" width="205" height="8"/>
<rect x="252" y="540" width="7" height="285"/><rect x="295" y="540" width="7" height="285"/><rect x="340" y="540" width="7" height="285"/><rect x="382" y="540" width="7" height="285"/>
<rect x="1130" y="536" width="205" height="6"/>
<rect x="1168" y="540" width="7" height="285"/><rect x="1215" y="540" width="7" height="285"/><rect x="1262" y="540" width="7" height="285"/><rect x="1308" y="540" width="7" height="285"/>
</g>
<rect x="1335" y="22" width="62" height="803" fill="#14100e"/>
</svg></div><div class="body"><h5><span class="l" style="letter-spacing:0.146px">Visit Bologna</span></h5><p><span class="l" style="letter-spacing:-0.177px">Bologna Congress Card allows</span><span class="l" style="letter-spacing:-0.013px">you to discover and live</span><span class="l" style="letter-spacing:0.058px">Bologna getting numerous</span><span class="l" style="letter-spacing:0.037px">discounts and promotions, on</span><span class="l" style="letter-spacing:0.009px">transportation, merchandising,</span><span class="l" style="letter-spacing:-0.121px">tours, and restaurants.</span></p></div></div>
<div class="card"><div class="img"><svg viewBox="30 22 1462 803" preserveAspectRatio="none">
<defs>
<filter id="b5"><feGaussianBlur stdDeviation="4"/></filter>
<filter id="b5s"><feGaussianBlur stdDeviation="2"/></filter>
<linearGradient id="col5" x1="0" y1="0" x2="1" y2="0"><stop offset="0" stop-color="#b85a2c"/><stop offset=".4" stop-color="#e8824a"/><stop offset="1" stop-color="#c8643a"/></linearGradient>
<clipPath id="p1"><rect x="30" y="180" width="415" height="330"/></clipPath>
<clipPath id="p2"><rect x="445" y="180" width="555" height="330"/></clipPath>
<clipPath id="p3"><rect x="1000" y="180" width="492" height="330"/></clipPath>
</defs>
<rect x="30" y="22" width="1462" height="803" fill="#fff"/>
<rect x="30" y="22" width="1462" height="160" fill="#2180bc"/>
<text x="38" y="106" font-family="Liberation Sans" font-size="38" fill="#dcebf6" textLength="115" lengthAdjust="spacingAndGlyphs">VISIT</text>
<text x="152" y="106" font-family="Liberation Sans" font-size="56" fill="#fff" textLength="180" lengthAdjust="spacingAndGlyphs">EMILIA</text>
<text x="332" y="106" font-family="Liberation Sans" font-size="56" fill="#fff" textLength="250" lengthAdjust="spacingAndGlyphs">ROMAGNA</text>
<rect x="340" y="112" width="242" height="6" fill="#fff"/>
<rect x="495" y="130" width="86" height="25" fill="#e6f0f8"/>
<g fill="none" stroke="#cfe3f2" stroke-width="5" stroke-dasharray="5 8" opacity=".6">
<circle cx="725" cy="100" r="52"/><circle cx="865" cy="100" r="52"/><circle cx="1010" cy="100" r="52"/><circle cx="1155" cy="100" r="52"/><circle cx="1300" cy="100" r="52"/><circle cx="1442" cy="100" r="52"/></g>
<g fill="#d6e8f5" opacity=".5">
<path d="M690 80 L760 120 L750 135 L700 110Z M700 130 L750 70 L760 80 L715 135Z"/>
<path d="M850 60 L870 60 L880 120 L900 140 L830 140 L855 120Z"/>
<circle cx="1010" cy="90" r="20"/><rect x="990" y="115" width="45" height="20"/>
<rect x="1135" y="55" width="42" height="80"/><rect x="1120" y="135" width="72" height="10"/>
<path d="M1300 60 L1325 100 L1275 100Z"/><rect x="1280" y="105" width="42" height="35"/>
<circle cx="1440" cy="85" r="18"/><rect x="1420" y="110" width="40" height="25"/></g>
<!-- photo 1 columns + car -->
<g clip-path="url(#p1)">
<rect x="30" y="180" width="415" height="330" fill="#b9b7b4"/>
<g filter="url(#b5s)">
<rect x="30" y="180" width="40" height="320" fill="#8e8c8a"/><rect x="70" y="180" width="52" height="300" fill="#e4e2e0"/><rect x="122" y="180" width="30" height="320" fill="#8a8886"/><rect x="152" y="180" width="40" height="290" fill="#dcdad8"/>
<rect x="192" y="180" width="100" height="200" fill="#a4a2a0"/><rect x="200" y="330" width="85" height="110" fill="#d6d4d2"/>
<path d="M215 330 L220 230 L235 195 L255 195 L268 235 L272 330Z" fill="#d0cecc"/>
<rect x="292" y="180" width="40" height="290" fill="#e0dedc"/><rect x="332" y="180" width="30" height="320" fill="#8a8886"/><rect x="362" y="180" width="50" height="300" fill="#e6e4e2"/><rect x="412" y="180" width="33" height="330" fill="#5e5a58"/>
<rect x="30" y="395" width="415" height="50" fill="#c4c2c0" opacity=".7"/>
</g>
<rect x="30" y="485" width="415" height="25" fill="#4a4846"/>
<path d="M100 470 Q105 440 150 432 Q200 412 260 418 Q310 430 340 445 Q385 450 392 470 L390 488 L105 490Z" fill="#f0cf22"/>
<path d="M170 432 Q210 418 255 422 L285 440 L165 442Z" fill="#3a3a34"/>
<circle cx="150" cy="478" r="22" fill="#2a2826"/><circle cx="335" cy="478" r="22" fill="#2a2826"/>
</g>
<!-- photo 2 cheese -->
<g clip-path="url(#p2)">
<rect x="445" y="180" width="555" height="330" fill="#d5d6d6"/>
<g filter="url(#b5s)">
<rect x="445" y="330" width="220" height="180" fill="#c9ccd0"/>
<path d="M512 240 L640 190 L835 180 L820 210 L690 320 L640 330 L525 300Z" fill="#e6d3a2"/>
<path d="M525 300 L640 330 L650 430 L540 400Z" fill="#caa868"/>
<path d="M640 330 L690 320 L820 210 L790 300 L700 420 L650 430Z" fill="#d8c088"/>
<path d="M835 180 L1000 180 L1000 330 L900 340 L820 300Z" fill="#ece8e0"/>
<path d="M830 265 Q870 240 910 268 L905 300 L840 300Z" fill="#f0d89a"/>
<path d="M880 330 L1000 290 L1000 360 L900 370Z" fill="#e8e2d0"/>
<ellipse cx="712" cy="365" rx="78" ry="48" fill="#f2efcf"/><ellipse cx="712" cy="385" rx="70" ry="28" fill="#e6dc9a"/>
<rect x="705" y="410" width="14" height="90" fill="#dcdcd4"/>
<ellipse cx="560" cy="455" rx="60" ry="50" fill="#c2c4c4"/>
<ellipse cx="865" cy="440" rx="125" ry="78" fill="#f4f4f2"/>
<ellipse cx="870" cy="440" rx="100" ry="58" fill="#dcc58c"/>
<ellipse cx="850" cy="400" rx="50" ry="30" fill="#ead8a4"/>
<path d="M790 350 Q850 330 900 355 L895 372 Q850 350 795 368Z" fill="#5a5a58"/>
</g></g>
<!-- photo 3 portico -->
<g clip-path="url(#p3)">
<rect x="1000" y="180" width="492" height="330" fill="#7a4a2e"/>
<g filter="url(#b5s)">
<rect x="1000" y="180" width="60" height="330" fill="#a85a30"/>
<rect x="1060" y="180" width="70" height="330" fill="#4a2c1c"/>
<path d="M1060 180 L1492 180 L1492 230 L1300 215 L1200 200Z" fill="#c49a6a"/>
<path d="M1120 470 L1120 320 Q1130 235 1195 228 Q1258 235 1265 320 L1265 470Z" fill="#a86a4a"/>
<path d="M1135 330 Q1145 250 1195 240 Q1240 250 1250 330Z" fill="#eef0ea"/>
<rect x="1128" y="290" width="30" height="120" fill="#5a8a30"/>
<rect x="1160" y="330" width="90" height="110" fill="#a8563a"/>
<rect x="1265" y="210" width="70" height="270" fill="#6a4428"/>
<rect x="1285" y="230" width="22" height="240" fill="#8a6a4a"/>
<rect x="1335" y="215" width="58" height="295" fill="url(#col5)"/>
<rect x="1328" y="195" width="72" height="35" fill="#c8b89a"/>
<rect x="1400" y="185" width="72" height="325" fill="url(#col5)"/>
<rect x="1472" y="180" width="20" height="330" fill="#8a4a3a"/>
<rect x="1000" y="455" width="335" height="55" fill="#8a7a62"/>
<rect x="1010" y="470" width="150" height="25" fill="#2e2a26"/>
<rect x="1150" y="440" width="120" height="20" fill="#d8ccb0"/>
</g></g>
<!-- text block -->
<text x="370" y="628" font-family="Liberation Serif" font-weight="bold" font-size="84" fill="#f2125a" stroke="#f2125a" stroke-width="5" textLength="795" lengthAdjust="spacingAndGlyphs">EMILIA-ROMAGNA</text>
<text x="332" y="706" font-family="Liberation Sans" font-style="italic" font-size="74" fill="#2a7fc0" textLength="852" lengthAdjust="spacingAndGlyphs">...never ending stories</text>
<rect x="30" y="762" width="1462" height="63" fill="#ff005b"/>
<text x="490" y="808" font-family="Liberation Sans" font-weight="bold" font-style="italic" font-size="42" fill="#fff" textLength="540" lengthAdjust="spacingAndGlyphs">emiliaromagnaturismo.it</text>
</svg></div><div class="body"><h5><span class="l" style="letter-spacing:0.001px">Visit Emilia Romagna</span></h5><p><span class="l" style="letter-spacing:-0.132px">Welcome to Emilia Romagna,</span><span class="l" style="letter-spacing:0.059px">a captivating region in</span><span class="l" style="letter-spacing:0.098px">northern Italy renowned for its</span><span class="l" style="letter-spacing:-0.062px">delectable cuisine, picturesque</span><span class="l" style="letter-spacing:-0.096px">landscapes, and rich cultural</span><span class="l" style="letter-spacing:-0.009px">heritage</span></p></div></div>
</div>
</body>
</html>
